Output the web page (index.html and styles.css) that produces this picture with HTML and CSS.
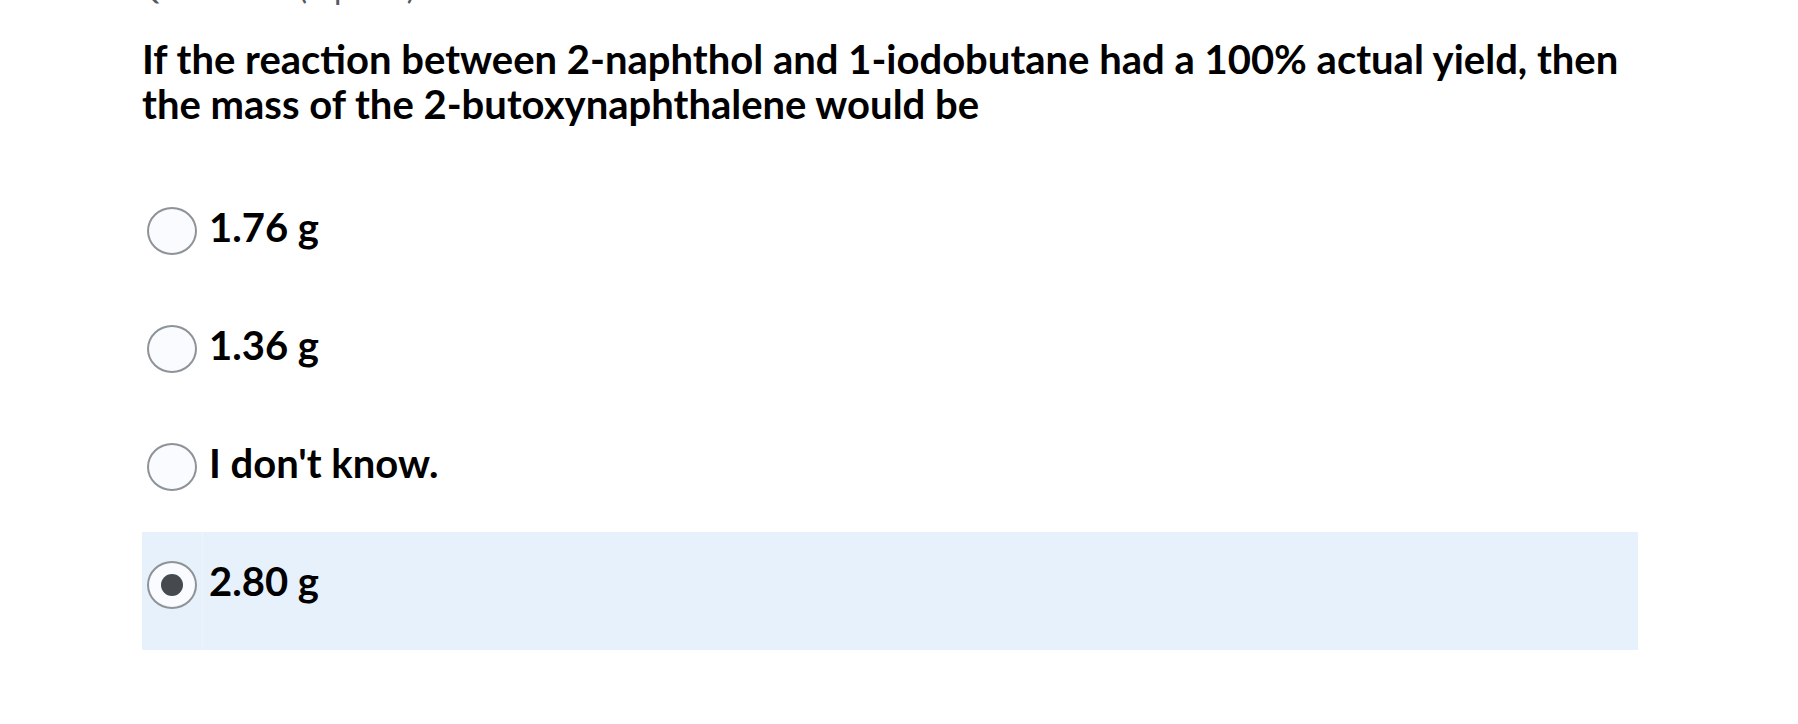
FILE: index.html
```html
<!DOCTYPE html>
<html lang="en">
<head>
<meta charset="utf-8">
<title>Question</title>
<link rel="stylesheet" href="styles.css">
</head>
<body>
<main class="page">
  <h2 class="q-heading">Question 4 (1 point)</h2>
  <p class="q-text">If the reaction between 2-naphthol and 1-iodobutane had a 100% actual yield, then the mass of the 2-butoxynaphthalene would be</p>
  <div class="options">
    <label class="option">
      <span class="radio-cell"><span class="radio"></span></span>
      <span class="label">1.76 g</span>
    </label>
    <label class="option">
      <span class="radio-cell"><span class="radio"></span></span>
      <span class="label">1.36 g</span>
    </label>
    <label class="option">
      <span class="radio-cell"><span class="radio"></span></span>
      <span class="label">I don't know.</span>
    </label>
    <label class="option selected">
      <span class="radio-cell"><span class="radio checked"></span></span>
      <span class="label">2.80 g</span>
    </label>
  </div>
</main>
</body>
</html>
```
FILE: styles.css
```css
html, body {
  margin: 0;
  padding: 0;
  background: #ffffff;
}
body {
  font-family: Lato, "Open Sans", "Liberation Sans", sans-serif;
  color: #000000;
  overflow: hidden;
}
.page {
  padding-left: 142px;
  width: 1496px;
}
.q-heading {
  margin: -30px 0 0 -8px;
  font-size: 32px;
  line-height: 34px;
  font-weight: 400;
  color: #555a60;
}
.q-text {
  margin: 33px 0 0 0;
  font-size: 40px;
  line-height: 45px;
  font-weight: 700;
  width: 1490px;
}
.options {
  margin-top: 51px;
  display: flex;
  flex-direction: column;
}
.option {
  display: flex;
  align-items: flex-start;
  height: 118px;
}
.option.selected {
  background: #e7f1fb;
}
.radio-cell {
  width: 61px;
  flex: none;
  height: 100%;
  box-sizing: border-box;
  padding: 29px 0 0 5px;
  border-right: 1px solid transparent;
}
.option.selected .radio-cell {
  border-right-color: #edf4fc;
}
.radio {
  display: flex;
  align-items: center;
  justify-content: center;
  box-sizing: border-box;
  width: 50px;
  height: 48px;
  border-radius: 50%;
  border: 2px solid #8e9397;
  background: #f9fbff;
}
.radio.checked::after {
  content: "";
  width: 22px;
  height: 22px;
  border-radius: 50%;
  background: #46494e;
}
.label {
  padding: 27px 0 0 6px;
  font-size: 40px;
  line-height: 45px;
  font-weight: 700;
}
```
